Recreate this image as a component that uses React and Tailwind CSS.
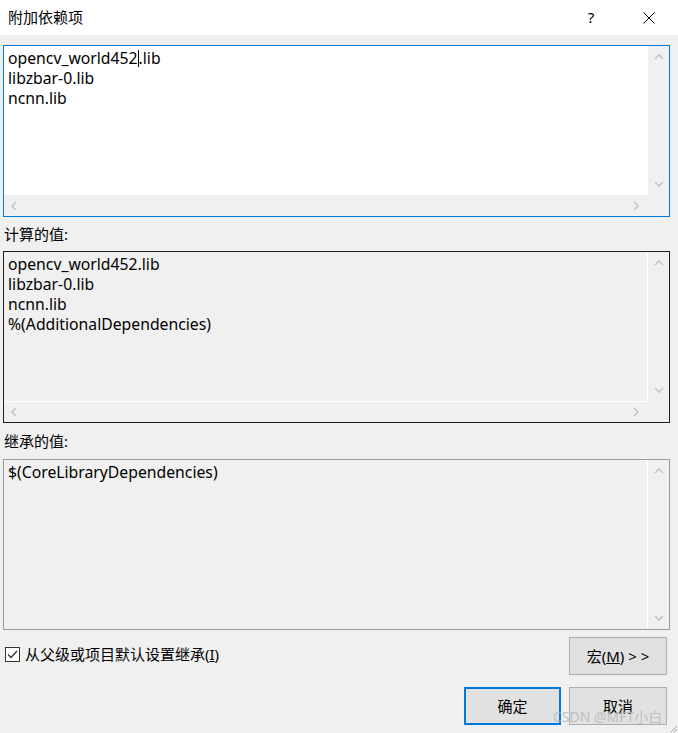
import React from "react";

const FONT = { fontFamily: '"Noto Sans", "Noto Sans CJK SC", sans-serif' };

function Chevron({ dir }) {
  const pts = {
    up: "1,6 5,2 9,6",
    down: "1,2 5,6 9,2",
    left: "6,1 2,5 6,9",
    right: "2,1 6,5 2,9",
  }[dir];
  const vert = dir === "up" || dir === "down";
  return (
    <svg width={vert ? 10 : 8} height={vert ? 8 : 10} viewBox={vert ? "0 0 10 8" : "0 0 8 10"}>
      <polyline points={pts} fill="none" stroke="#c4c4c4" strokeWidth="1.6" />
    </svg>
  );
}

function Lines({ lines, caret }) {
  return (
    <div className="pl-[4px] pt-[2px] text-[15.75px] leading-[20px] text-black">
      {lines.map((l, i) => (
        <div key={i} className="whitespace-pre">
          {caret && i === 0 ? (
            <>
              opencv_world452
              <span className="inline-block w-px h-[17px] bg-black align-[-3px]" />
              .lib
            </>
          ) : (
            l
          )}
        </div>
      ))}
    </div>
  );
}

function BoxWithBoth({ border, bg, divider, lines, caret, height }) {
  return (
    <div className={`border ${border} flex flex-col`} style={{ height }}>
      <div className="flex flex-1 min-h-0">
        <div className={`flex-1 ${bg} ${divider ? "border-r border-white" : ""}`}>
          <Lines lines={lines} caret={caret} />
        </div>
        <div className="w-[21px] flex flex-col items-center justify-between py-[7px] bg-[#f0f0f0]">
          <Chevron dir="up" />
          <Chevron dir="down" />
        </div>
      </div>
      <div className="flex h-[21px]">
        <div
          className={`flex-1 flex items-center justify-between pl-[6px] pr-[8px] bg-[#f0f0f0] ${
            divider ? "border-t border-white" : ""
          }`}
        >
          <Chevron dir="left" />
          <Chevron dir="right" />
        </div>
        <div className="w-[21px] bg-[#f0f0f0]" />
      </div>
    </div>
  );
}

export default function App() {
  return (
    <div className="w-[678px] h-[733px] bg-[#f0f0f0] relative overflow-hidden text-black" style={FONT}>
      {/* title bar */}
      <div className="h-[35px] bg-white flex items-center justify-between pl-[8px]">
        <span className="text-[15px] leading-none">附加依赖项</span>
        <div className="flex items-center h-full">
          <span className="text-[15px] w-[46px] text-center mr-[12px]">?</span>
          <div className="w-[46px] h-full flex items-center justify-center mr-[6px]">
            <svg width="12" height="12" viewBox="0 0 12 12">
              <path d="M0.5 0.5 L11.5 11.5 M11.5 0.5 L0.5 11.5" stroke="#000" strokeWidth="1" />
            </svg>
          </div>
        </div>
      </div>

      <div className="pl-[3px] pr-[8px] pt-[10px]">
        <BoxWithBoth
          border="border-[#0078d7]"
          bg="bg-white"
          lines={["opencv_world452.lib", "libzbar-0.lib", "ncnn.lib"]}
          caret
          height={172}
        />

        <div className="h-[34px] flex items-center pl-[1px] text-[15px]">计算的值:</div>

        <BoxWithBoth
          border="border-[#1e1e1e]"
          bg="bg-[#f0f0f0]"
          divider
          lines={["opencv_world452.lib", "libzbar-0.lib", "ncnn.lib", "%(AdditionalDependencies)"]}
          height={172}
        />

        <div className="h-[36px] flex items-center pl-[1px] text-[15px]">继承的值:</div>

        <div className="h-[171px] border border-[#9a9a9a] flex">
          <div className="flex-1 border-r border-white">
            <Lines lines={["$(CoreLibraryDependencies)"]} />
          </div>
          <div className="w-[21px] flex flex-col items-center justify-between py-[7px]">
            <Chevron dir="up" />
            <Chevron dir="down" />
          </div>
        </div>

        <div className="flex items-start justify-between mt-[7px]">
          <div className="flex items-center mt-[6px] ml-[2px]">
            <div className="w-[15px] h-[15px] border border-[#333] bg-white flex items-center justify-center">
              <svg width="11" height="9" viewBox="0 0 11 9">
                <polyline points="1,4.5 4,7.5 10,1" fill="none" stroke="#333" strokeWidth="1.3" />
              </svg>
            </div>
            <span className="ml-[5px] text-[15px]">
              从父级或项目默认设置继承(<span className="underline">I</span>)
            </span>
          </div>
          <div className="w-[98px] h-[38px] bg-[#e1e1e1] border border-[#adadad] flex items-center justify-center text-[15px] mr-[3px] whitespace-pre">
            宏(<span className="underline">M</span>) &gt; &gt;
          </div>
        </div>

        <div className="flex justify-end gap-[8px] mt-[12px] mr-[3px]">
          <div className="w-[97px] h-[38px] bg-[#e1e1e1] border-2 border-[#0078d7] flex items-center justify-center text-[15px]">
            确定
          </div>
          <div className="w-[98px] h-[38px] bg-[#e1e1e1] border border-[#adadad] flex items-center justify-center text-[15px]">
            取消
          </div>
        </div>
      </div>

      {/* watermark */}
      <div className="absolute left-[553px] top-[706px] text-[14px] text-[#b5b5b5]/80 whitespace-nowrap">
        CSDN @MFT小白
      </div>
      {/* resize grip */}
      <svg className="absolute right-0 bottom-0" width="9" height="9" viewBox="0 0 9 9">
        <path d="M8 2 L2 8 M8 5 L5 8" stroke="#a0a0a0" strokeWidth="1" />
      </svg>
    </div>
  );
}
